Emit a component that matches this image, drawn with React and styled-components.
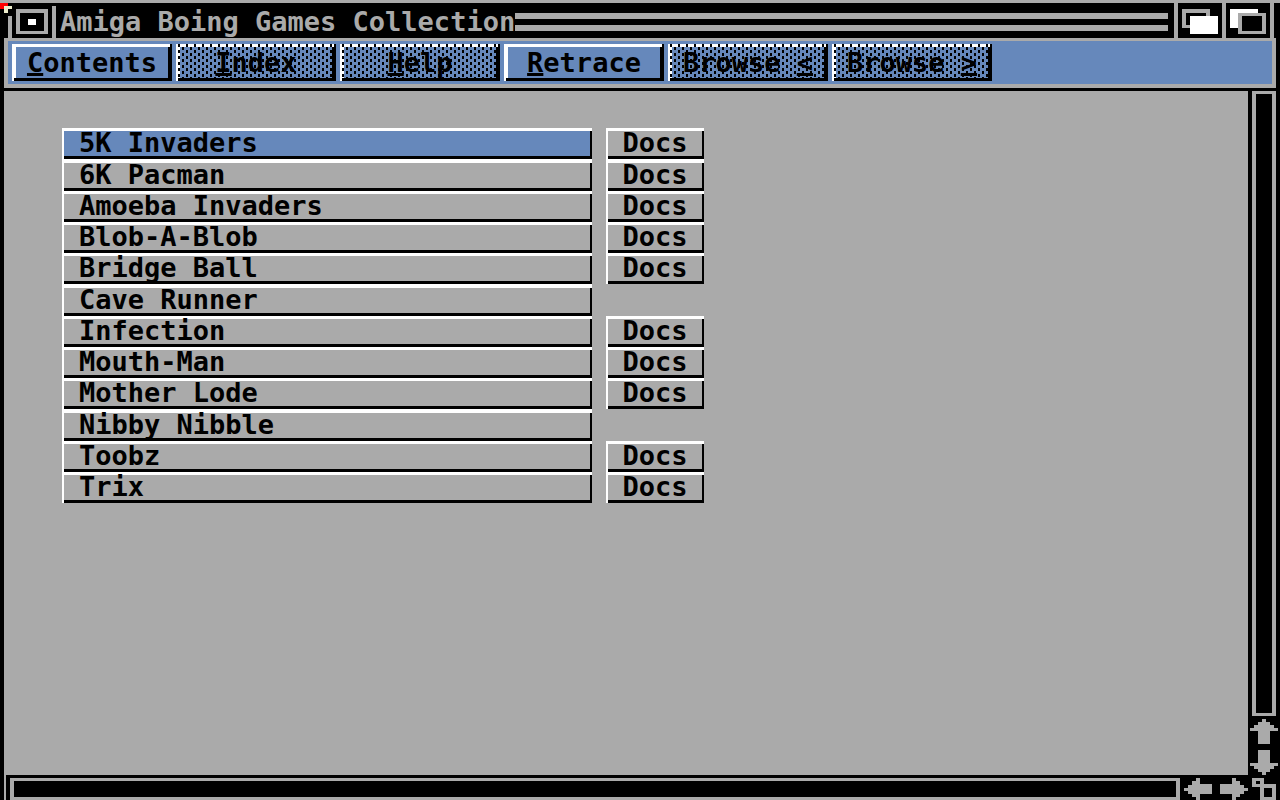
import React, { useState } from "react";
import styled, { createGlobalStyle, css } from "styled-components";

const GREY = "#aaaaaa";
const BLUE = "#6688bb";

const GlobalStyle = createGlobalStyle`
  * { box-sizing: border-box; }
  body { margin: 0; background: #000; }
  body, button { font: bold 27px/25px "DejaVu Sans Mono", monospace; color: #000; }
  button { border-radius: 0; cursor: pointer; }
  svg { display: block; }
`;

const Screen = styled.div`
  display: flex;
  flex-direction: column;
  height: 100vh;
  background: #000;
`;

const TitleBar = styled.header`
  display: flex;
  align-items: stretch;
  height: 38px;
  flex: none;
  position: relative;
  border-top: 3px solid ${GREY};
  padding-left: 8px;
  padding-right: 6px;
`;

const Pointer = styled.svg`
  position: absolute;
  left: 0;
  top: 0;
`;

const Gadget = styled.button`
  display: block;
  flex: none;
  width: ${(p) => p.$width}px;
  padding: 0;
  border: 0;
  background: #000;
`;

const Title = styled.h1`
  margin: 0;
  padding: 6px 0 0 4px;
  color: ${GREY};
  font: inherit;
  white-space: pre;
`;

const Stripes = styled.div`
  flex: 1;
  margin: 10px 6px 7px 0;
  border: solid ${GREY};
  border-width: 6px 0;
`;

const Toolbar = styled.nav`
  display: flex;
  flex: none;
  gap: 4px;
  margin: 0 4px 3px;
  padding: 3px 4px;
  border: solid ${GREY};
  border-width: 3px 4px 4px;
  background: ${BLUE};
`;

const ToolButton = styled.button`
  position: relative;
  width: 160px;
  height: 37px;
  padding: 0;
  border: 0;
  background: ${BLUE};
  box-shadow:
    inset 2px 0 #fff,
    inset -2px 0 #000,
    inset 0 3px #fff,
    inset 0 -3px #000,
    inset 4px 0 #fff,
    inset -4px 0 #000;
  &:disabled { color: #000; cursor: default; }
`;

const Dither = styled.svg`
  position: absolute;
  left: 0;
  top: 0;
`;

const Key = styled.u`
  text-decoration-thickness: 3px;
  text-underline-offset: 1px;
  text-decoration-skip-ink: none;
`;

const Body = styled.div`
  display: flex;
  flex: 1;
  min-height: 0;
`;

const Content = styled.main`
  flex: 1;
  margin-left: 4px;
  padding: 37px 58px;
  background: ${GREY};
`;

const GameList = styled.ul`
  margin: 0;
  padding: 0;
  list-style: none;
`;

const ListButton = styled.button`
  padding: 0 0 2px;
  border: 0;
  background: ${GREY};
  box-shadow:
    inset 2px 0 #fff,
    inset 0 3px #fff,
    inset -2px 0 #000,
    inset 0 -3px #000;
  white-space: pre;
  ${(p) => p.$entry && css`
    padding-left: 17px;
    text-align: left;
  `}
  ${(p) => p.$selected && css`background: ${BLUE};`}
`;

const GameRow = styled.li`
  display: grid;
  grid-template-columns: 530px 98px;
  column-gap: 14px;
  height: 31px;
  &:nth-child(4n + 2) { height: 32px; }
  &:nth-child(4n + 2) > ${ListButton} {
    box-shadow:
      inset 2px 0 #fff,
      inset 0 4px #fff,
      inset -2px 0 #000,
      inset 0 -3px #000;
  }
`;

const SideBar = styled.aside`
  display: flex;
  flex-direction: column;
  width: 32px;
  padding-left: 4px;
`;

const VerticalTrack = styled.div`
  flex: 1;
  width: 24px;
  border: solid ${GREY};
  border-width: 3px 4px;
`;

const ArrowPair = styled.div`
  display: flex;
  flex-direction: ${(p) => (p.$vertical ? "column" : "row")};
  flex: none;
  margin-left: ${(p) => (p.$vertical ? "-4px" : "0")};
`;

const BottomBar = styled.footer`
  display: flex;
  flex: none;
  height: 25px;
  margin-left: 4px;
  padding-left: 4px;
  border-left: 2px solid ${GREY};
`;

const HorizontalTrack = styled.div`
  flex: 1;
  margin-top: 3px;
  border: solid ${GREY};
  border-width: 3px 4px;
`;

const tools = [
  { key: "C", rest: "ontents" },
  { key: "I", rest: "ndex", off: true },
  { key: "H", rest: "elp", off: true },
  { key: "R", rest: "etrace" },
  { label: "Browse", key: "<", off: true },
  { label: "Browse", key: ">", off: true },
];

const games = [
  ["5K Invaders", true],
  ["6K Pacman", true],
  ["Amoeba Invaders", true],
  ["Blob-A-Blob", true],
  ["Bridge Ball", true],
  ["Cave Runner", false],
  ["Infection", true],
  ["Mouth-Man", true],
  ["Mother Lode", true],
  ["Nibby Nibble", false],
  ["Toobz", true],
  ["Trix", true],
];

function DitherPattern() {
  return (
    <Dither width="160" height="37" shapeRendering="crispEdges" aria-hidden="true">
      <defs>
        <pattern id="dither" width="8" height="6" patternUnits="userSpaceOnUse">
          <path d="M2 0h2v3h-2zM6 3h2v3h-2z" fill="#000" />
        </pattern>
      </defs>
      <rect width="160" height="37" fill="url(#dither)" />
    </Dither>
  );
}

export default function App() {
  const [selected, setSelected] = useState(0);
  return (
    <Screen>
      <GlobalStyle />
      <TitleBar>
        <Gadget $width={48} aria-label="Close">
          <svg width="48" height="35" shapeRendering="crispEdges">
            <path d="M0 13h4v22h-4zM44 3h4v32h-4z" fill={GREY} />
            <path fillRule="evenodd" d="M8 6h32v25h-32zM12 10v18h24v-18z" fill={GREY} />
            <path d="M20 16h8v6h-8z" fill="#fff" />
          </svg>
        </Gadget>
        <Title>Amiga Boing Games Collection</Title>
        <Stripes />
        <Gadget $width={48} aria-label="Send to back">
          <svg width="48" height="35" shapeRendering="crispEdges">
            <path d="M0 0h4v35h-4z" fill={GREY} />
            <path fillRule="evenodd" d="M8 6h28v19h-28zM12 10v12h20v-12z" fill={GREY} />
            <path d="M16 13h28v18h-28z" fill="#fff" />
          </svg>
        </Gadget>
        <Gadget $width={52} aria-label="Bring to front">
          <svg width="52" height="35" shapeRendering="crispEdges">
            <path d="M0 0h4v35h-4zM48 0h4v35h-4z" fill={GREY} />
            <path d="M8 6h28v19h-28z" fill="#fff" />
            <path d="M16 10h28v21h-28z" fill={GREY} />
            <path d="M20 13h20v15h-20z" fill="#000" />
          </svg>
        </Gadget>
        <Pointer width="12" height="10" shapeRendering="crispEdges" aria-hidden="true">
          <path d="M0 0h8v3h-4v3h-4z" fill="#f00" />
          <path d="M4 3h8v3h-4v4h-4z" fill="#eeeecc" />
        </Pointer>
      </TitleBar>
      <Toolbar aria-label="Guide">
        {tools.map((t) => (
          <ToolButton key={(t.label || "") + t.key} disabled={t.off}>
            {t.label ? t.label + " " : ""}
            <Key>{t.key}</Key>
            {t.rest}
            {t.off && <DitherPattern />}
          </ToolButton>
        ))}
      </Toolbar>
      <Body>
        <Content>
          <GameList>
            {games.map(([name, docs], i) => (
              <GameRow key={name}>
                <ListButton $entry $selected={i === selected} onClick={() => setSelected(i)}>
                  {name}
                </ListButton>
                {docs && <ListButton>Docs</ListButton>}
              </GameRow>
            ))}
          </GameList>
        </Content>
        <SideBar>
          <VerticalTrack />
          <ArrowPair $vertical>
            <Gadget $width={32} aria-label="Scroll up">
              <svg width="32" height="31" shapeRendering="crispEdges">
                <path d="M14 3h4v3h4v3h4v3h4v3h-8v13h-12v-13h-8v-3h4v-3h4v-3h4z" fill={GREY} />
              </svg>
            </Gadget>
            <Gadget $width={32} aria-label="Scroll down">
              <svg width="32" height="28" shapeRendering="crispEdges">
                <path d="M10 3h12v13h8v3h-4v3h-4v3h-4v3h-4v-3h-4v-3h-4v-3h-4v-3h8z" fill={GREY} />
              </svg>
            </Gadget>
          </ArrowPair>
        </SideBar>
      </Body>
      <BottomBar>
        <HorizontalTrack />
        <ArrowPair>
          <Gadget $width={36} aria-label="Scroll left">
            <svg width="36" height="25" shapeRendering="crispEdges">
              <path d="M4 13h4v-3h4v-4h4v-3h4v6h12v10h-12v6h-4v-3h-4v-3h-4v-3h-4z" fill={GREY} />
            </svg>
          </Gadget>
          <Gadget $width={36} aria-label="Scroll right">
            <svg width="36" height="25" shapeRendering="crispEdges">
              <path d="M4 9h12v-6h4v3h4v4h4v3h4v3h-4v3h-4v3h-4v3h-4v-6h-12z" fill={GREY} />
            </svg>
          </Gadget>
          <Gadget $width={28} aria-label="Resize">
            <svg width="28" height="25" shapeRendering="crispEdges">
              <path d="M0 3h12v6h12v16h-16v-13h-8z" fill={GREY} />
              <path d="M4 6h4v3h-4zM12 13h8v9h-8z" fill="#000" />
            </svg>
          </Gadget>
        </ArrowPair>
      </BottomBar>
    </Screen>
  );
}
